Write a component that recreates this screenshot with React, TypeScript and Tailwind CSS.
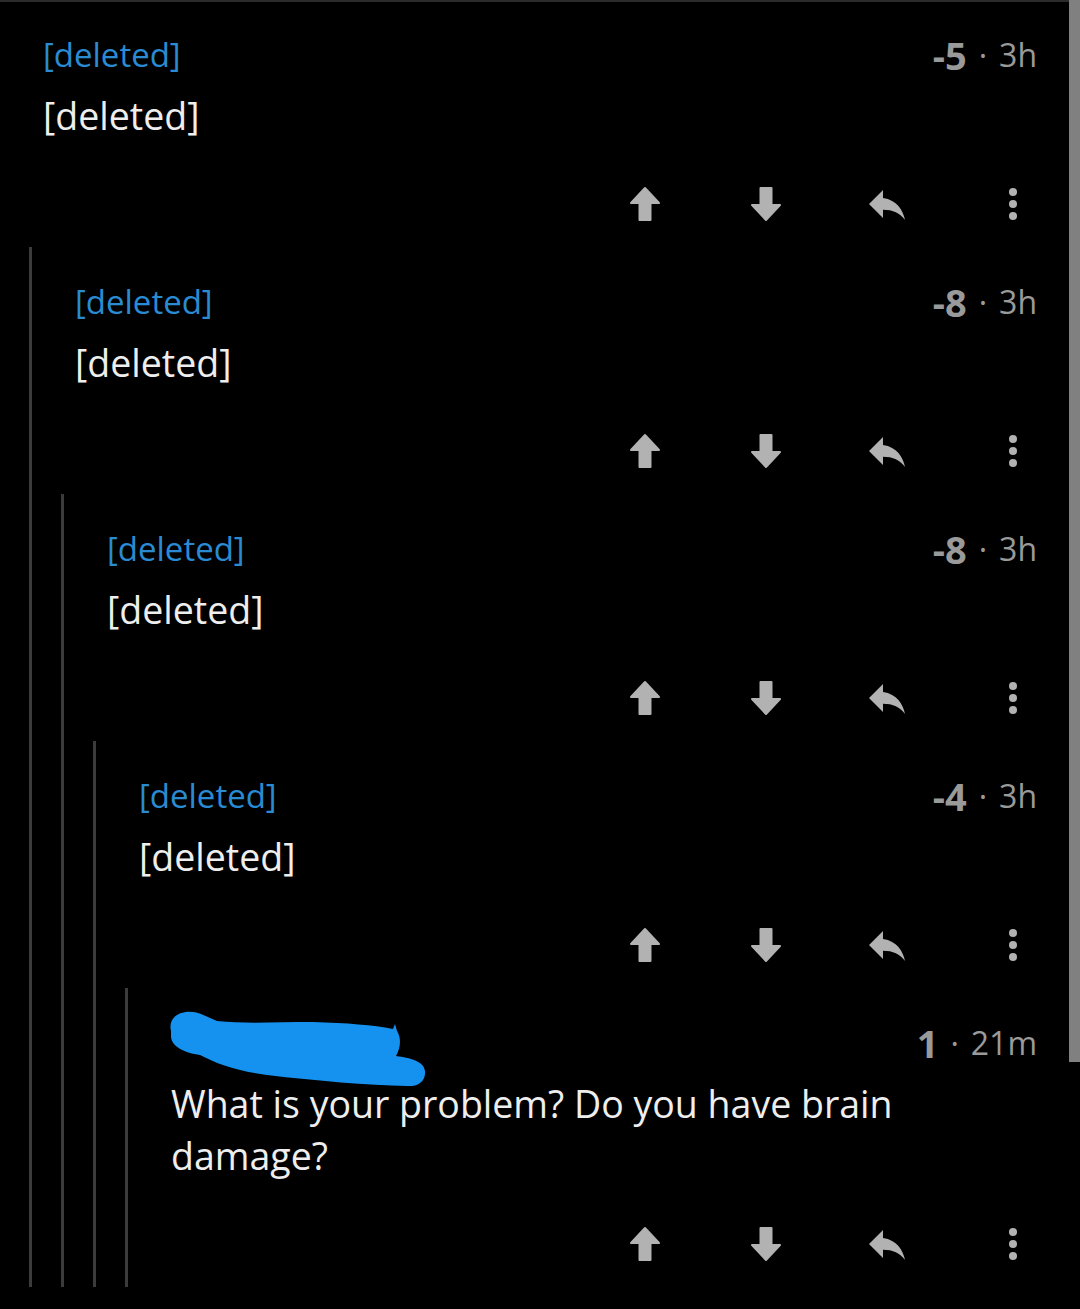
import type { ReactNode } from 'react'

type Item = {
  user: string
  body: string
  score: string
  age: string
  hidden?: boolean
}

const THREAD: Item[] = [
  { user: '[deleted]', body: '[deleted]', score: '-5', age: '3h' },
  { user: '[deleted]', body: '[deleted]', score: '-8', age: '3h' },
  { user: '[deleted]', body: '[deleted]', score: '-8', age: '3h' },
  { user: '[deleted]', body: '[deleted]', score: '-4', age: '3h' },
  {
    user: 'someone',
    body: 'What is your problem? Do you have brain damage?',
    score: '1',
    age: '21m',
    hidden: true,
  },
]

const FONT = { fontFamily: '"Open Sans", "Noto Sans", sans-serif' }

function UpArrow() {
  return (
    <svg width="32" height="36" viewBox="0 0 32 36" className="fill-[#b2b2b2] stroke-[#b2b2b2]">
      <path d="M16 2 L30 17 L21.5 17 L21.5 34 L10.5 34 L10.5 17 L2 17 Z" strokeWidth="2" strokeLinejoin="round" />
    </svg>
  )
}

function DownArrow() {
  return (
    <svg width="32" height="36" viewBox="0 0 32 36" className="fill-[#b2b2b2] stroke-[#b2b2b2]">
      <path d="M16 34 L30 19 L21.5 19 L21.5 2 L10.5 2 L10.5 19 L2 19 Z" strokeWidth="2" strokeLinejoin="round" />
    </svg>
  )
}

function Reply() {
  return (
    <svg width="48" height="48" viewBox="0 0 24 24" className="fill-[#b2b2b2]">
      <path d="M10 9V5l-7 7 7 7v-4.1c5 0 8.5 1.6 11 5.1-1-5-4-10-11-11z" />
    </svg>
  )
}

function Dots() {
  return (
    <svg width="12" height="36" viewBox="0 0 12 36" className="fill-[#b2b2b2]">
      <circle cx="6" cy="6" r="4" />
      <circle cx="6" cy="18" r="4" />
      <circle cx="6" cy="30" r="4" />
    </svg>
  )
}

// Pintura azul tapando el nombre de usuario.
function Scribble() {
  return (
    <span className="relative block w-[230px] h-[40px]">
      <svg
        width="262"
        height="82"
        viewBox="0 0 262 82"
        className="absolute left-[-4px] top-[-16px] fill-[#1592f0]"
      >
        <path d="M4 24 C0 8 18 1 34 7 L50 14 C78 17 108 15 146 15 C180 16 206 18 226 22 L228 17 L230 24 C235 32 233 42 229 49 C243 51 257 54 258 64 C259 74 251 80 240 79 C200 78 150 74 100 68 C70 64 50 57 33 48 C18 46 5 40 4 30 Z" />
      </svg>
    </span>
  )
}

function Actions() {
  return (
    <div className="mt-[30px] h-[64px] flex items-center justify-end gap-[73px]">
      <button className="w-[48px] flex justify-center"><UpArrow /></button>
      <button className="w-[48px] flex justify-center"><DownArrow /></button>
      <button className="w-[48px] flex justify-center"><Reply /></button>
      <button className="w-[48px] ml-[5px] flex justify-center"><Dots /></button>
    </div>
  )
}

function Comment({ c }: { c: Item }) {
  return (
    <div className="pl-[43px] pr-[43px] pt-[35px] pb-[11px]">
      <div className="flex items-center justify-between h-[40px]">
        {c.hidden
          ? <Scribble />
          : <span className="text-[33px] leading-[40px] text-[#2a8bd3]">{c.user}</span>}
        <span className="flex items-center text-[32px] leading-[40px] text-[#9a9a9a]">
          <b className="font-bold text-[38px]">{c.score}</b>
          <span className="mx-[12px]">·</span>
          {c.age}
        </span>
      </div>
      <p className="mt-[15px] text-[37.5px] leading-[52px] text-[#eeeeee] pr-[80px]">{c.body}</p>
      <Actions />
    </div>
  )
}

function Thread({ items }: { items: Item[] }): ReactNode {
  if (!items.length) return null
  const [first, ...rest] = items
  return (
    <div>
      <Comment c={first} />
      {rest.length > 0 && (
        <div className="ml-[29px] border-l-[3px] border-[#3b3b3b]">
          <Thread items={rest} />
        </div>
      )}
    </div>
  )
}

export default function App() {
  return (
    <div className="relative w-[1080px] h-[1309px] bg-black overflow-hidden" style={FONT}>
      {/* borde superior de la barra */}
      <div className="absolute top-0 left-0 right-0 h-[2px] bg-[#2b2b2b]" />
      <Thread items={THREAD} />
      {/* barra de scroll */}
      <div className="absolute top-0 right-0 w-[11px] h-[1062px] bg-[#808080]" />
    </div>
  )
}
